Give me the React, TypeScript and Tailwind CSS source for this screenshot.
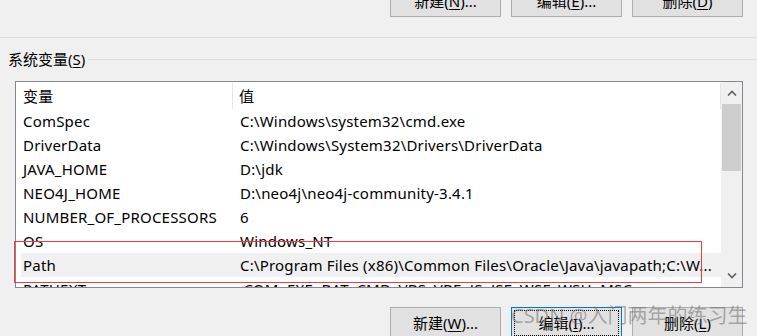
import React from "react";

const font = { fontFamily: '"Noto Sans", "Noto Sans CJK SC", sans-serif' };

function Btn({ label, m, rest, focused }: { label: string; m: string; rest: string; focused?: boolean }) {
  return (
    <div
      className={
        "relative w-[111px] h-[32px] shrink-0 flex items-center justify-center text-[15px] text-black bg-[#e1e1e1] border " +
        (focused ? "border-[#0078d7]" : "border-[#adadad]")
      }
    >
      {focused && <div className="absolute inset-[2px] border border-dotted border-black" />}
      <span className="leading-none">
        {label}(<span className="underline underline-offset-2">{m}</span>){rest}
      </span>
    </div>
  );
}

const rows: [string, string][] = [
  ["ComSpec", "C:\\Windows\\system32\\cmd.exe"],
  ["DriverData", "C:\\Windows\\System32\\Drivers\\DriverData"],
  ["JAVA_HOME", "D:\\jdk"],
  ["NEO4J_HOME", "D:\\neo4j\\neo4j-community-3.4.1"],
  ["NUMBER_OF_PROCESSORS", "6"],
  ["OS", "Windows_NT"],
  ["Path", "C:\\Program Files (x86)\\Common Files\\Oracle\\Java\\javapath;C:\\W..."],
  ["PATHEXT", ".COM;.EXE;.BAT;.CMD;.VBS;.VBE;.JS;.JSE;.WSF;.WSH;.MSC"],
];

export default function App() {
  return (
    <div className="relative w-[757px] h-[336px] overflow-hidden bg-[#f0f0f0] text-black" style={font}>
      {/* top buttons */}
      <div className="flex justify-end gap-[10px] pr-[14px] -mt-[15px]">
        <Btn label="新建" m="N" rest="..." />
        <Btn label="编辑" m="E" rest="..." />
        <Btn label="删除" m="D" rest="" />
      </div>
      <div className="mt-[20px] h-px bg-[#dcdcdc]" />
      {/* group label */}
      <div className="mt-[11px] h-[20px] flex items-center">
        <span className="pl-[8px] text-[15px] leading-none whitespace-nowrap">
          系统变量(<span className="underline underline-offset-2">S</span>)
        </span>
        <div className="flex-1 ml-[3px] h-px bg-[#dcdcdc]" />
      </div>
      {/* list */}
      <div className="mt-[12px] ml-[15px] w-[728px] h-[207px] border border-[#828790] bg-white flex overflow-hidden">
        <div className="pl-[5px] w-[705px] flex flex-col tracking-[0.2px]">
          <div className="h-[27px] shrink-0 flex items-stretch text-[15px]">
            <div className="w-[212px] flex items-center pl-[2px] pt-[2px] relative">
              变量
              <div className="absolute right-0 top-[1px] bottom-0 w-px bg-[#e5e5e5]" />
            </div>
            <div className="flex-1 flex items-center pl-[6px] pt-[2px] relative">
              值
              <div className="absolute right-0 top-[1px] bottom-0 w-px bg-[#e5e5e5]" />
            </div>
          </div>
          {rows.map(([k, v]) => (
            <div
              key={k}
              className={
                "h-[24px] shrink-0 flex items-center text-[15px] whitespace-nowrap " +
                (k === "Path" ? "bg-[#f0f0f0]" : "")
              }
            >
              <div className="w-[219px] pl-[2px]">{k}</div>
              <div className="flex-1 overflow-hidden">{v}</div>
            </div>
          ))}
        </div>
        {/* scrollbar */}
        <div className="w-[21px] h-full bg-[#f0f0f0] flex flex-col items-center">
          <div className="h-[22px] w-full flex items-center justify-center">
            <svg width="10" height="6" viewBox="0 0 10 6">
              <polyline points="1,5.5 5,1.5 9,5.5" fill="none" stroke="#606060" strokeWidth="1.6" />
            </svg>
          </div>
          <div className="w-[19px] h-[67px] bg-[#cdcdcd]" />
          <div className="flex-1" />
          <div className="h-[22px] w-full flex items-center justify-center">
            <svg width="10" height="6" viewBox="0 0 10 6">
              <polyline points="1,0.5 5,4.5 9,0.5" fill="none" stroke="#606060" strokeWidth="1.6" />
            </svg>
          </div>
        </div>
      </div>
      {/* bottom buttons */}
      <div className="mt-[19px] flex justify-end gap-[10px] pr-[14px]">
        <Btn label="新建" m="W" rest="..." />
        <Btn label="编辑" m="I" rest="..." focused />
        <Btn label="删除" m="L" rest="" />
      </div>
      {/* red annotation rectangle */}
      <div className="absolute left-[14px] top-[241px] w-[688px] h-[42px] border border-[#f23a3a] pointer-events-none" />
      {/* watermark */}
      <div
        className="absolute left-[511px] top-[306px] text-[20px] leading-none whitespace-nowrap text-[rgba(110,110,110,0.55)] pointer-events-none"
        style={font}
      >
        CSDN @入门两年的练习生
      </div>
    </div>
  );
}
